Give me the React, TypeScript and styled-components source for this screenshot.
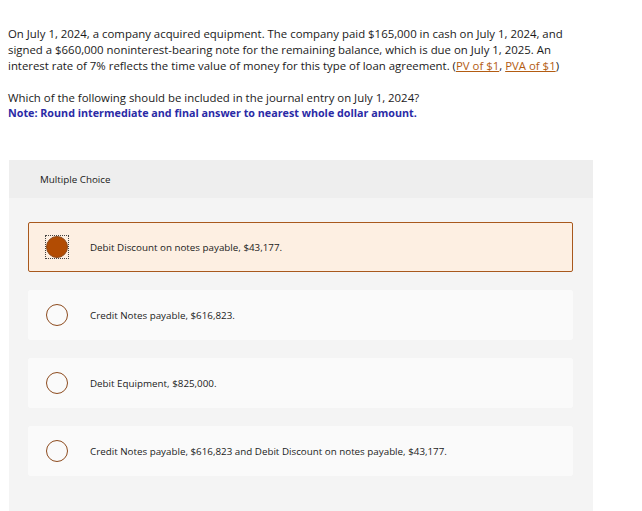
import React from "react";
import styled, { createGlobalStyle } from "styled-components";

const GlobalStyle = createGlobalStyle`
  body {
    margin: 0;
    background: #ffffff;
    font-family: "Open Sans", Lato, Arial, sans-serif;
    color: #1a1a1a;
  }
`;

const Page = styled.div`
  width: 642px;
  height: 511px;
  overflow: hidden;
  padding: 26px 0 0 8px;
  box-sizing: border-box;
`;

const Prompt = styled.p`
  margin: 0;
  white-space: nowrap;
  font-size: 11.4px;
  line-height: 16px;
`;

const RefLink = styled.a`
  color: #b35c12;
  text-decoration: underline;
`;

const Question = styled.p`
  margin: 16px 0 0;
  font-size: 11.4px;
  line-height: 16px;
`;

const Note = styled.p`
  margin: 0;
  font-size: 10.75px;
  line-height: 14px;
  font-weight: 700;
  color: #2a2aa6;
`;

const Panel = styled.section`
  margin: 40px 0 0 1px;
  width: 584px;
  background: #f4f4f4;
  padding-bottom: 40px;
`;

const PanelHeader = styled.div`
  height: 38px;
  background: #eeeeee;
  display: flex;
  align-items: center;
  padding-left: 31px;
  font-size: 9.8px;
`;

const Choices = styled.div`
  display: flex;
  flex-direction: column;
  gap: 18px;
  padding: 24px 20px 0 19px;
`;

const Choice = styled.div<{ $selected?: boolean }>`
  height: 50px;
  box-sizing: border-box;
  display: flex;
  align-items: center;
  border-radius: 2px;
  background: ${(p) => (p.$selected ? "#fdefe2" : "#fafafa")};
  border: 1px solid ${(p) => (p.$selected ? "#a8581d" : "#fafafa")};
  padding-left: 16px;
`;

const RadioFrame = styled.span<{ $focused?: boolean }>`
  width: 24px;
  height: 24px;
  box-sizing: border-box;
  display: flex;
  align-items: center;
  justify-content: center;
  border: 1px dotted ${(p) => (p.$focused ? "#444" : "transparent")};
  flex: none;
`;

const Radio = styled.span<{ $selected?: boolean }>`
  width: 22px;
  height: 22px;
  box-sizing: border-box;
  border-radius: 50%;
  border: 1.5px solid #8d4b1e;
  background: ${(p) => (p.$selected ? "#b24c03" : "transparent")};
`;

const Label = styled.span`
  margin-left: 21px;
  font-size: 9.8px;
`;

const options = [
  "Debit Discount on notes payable, $43,177.",
  "Credit Notes payable, $616,823.",
  "Debit Equipment, $825,000.",
  "Credit Notes payable, $616,823 and Debit Discount on notes payable, $43,177.",
];

export default function App() {
  return (
    <Page>
      <GlobalStyle />
      <Prompt>
        On July 1, 2024, a company acquired equipment. The company paid $165,000 in cash on July 1, 2024, and
        <br />
        signed a $660,000 noninterest-bearing note for the remaining balance, which is due on July 1, 2025. An
        <br />
        interest rate of 7% reflects the time value of money for this type of loan agreement. (
        <RefLink>PV of $1</RefLink>, <RefLink>PVA of $1</RefLink>)
      </Prompt>
      <Question>Which of the following should be included in the journal entry on July 1, 2024?</Question>
      <Note>Note: Round intermediate and final answer to nearest whole dollar amount.</Note>
      <Panel>
        <PanelHeader>Multiple Choice</PanelHeader>
        <Choices>
          {options.map((o, i) => (
            <Choice key={o} $selected={i === 0}>
              <RadioFrame $focused={i === 0}>
                <Radio $selected={i === 0} />
              </RadioFrame>
              <Label>{o}</Label>
            </Choice>
          ))}
        </Choices>
      </Panel>
    </Page>
  );
}
